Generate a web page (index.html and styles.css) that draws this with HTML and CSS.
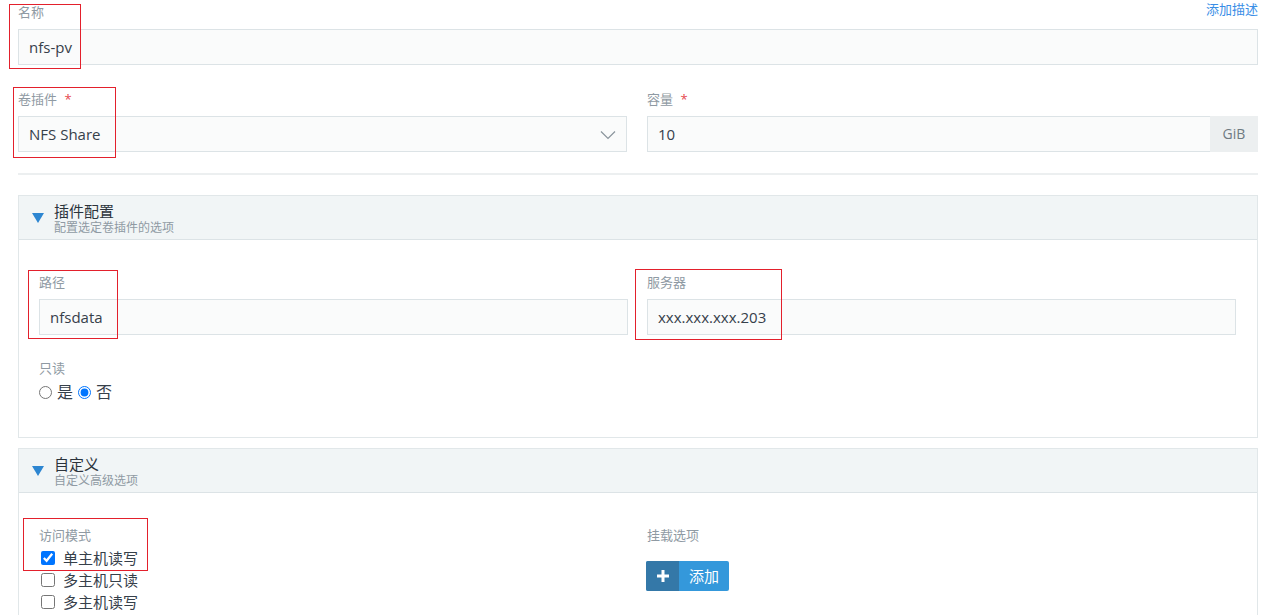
FILE: index.html
```html
<!DOCTYPE html>
<html lang="zh">
<head>
<meta charset="utf-8">
<title>创建存储卷</title>
<link rel="stylesheet" href="styles.css">
</head>
<body>
<div class="page">
  <div class="field">
    <div class="label-row">
      <span class="label">名称</span>
      <a class="link">添加描述</a>
    </div>
    <div class="input">nfs-pv</div>
  </div>

  <div class="grid two top-gap">
    <div class="field">
      <div class="label-row"><span class="label">卷插件 <span class="req">*</span></span></div>
      <div class="input select">NFS Share
        <svg class="chev" width="16" height="10" viewBox="0 0 16 10"><path d="M1 1.5 L8 8.5 L15 1.5" fill="none" stroke="#8a949c" stroke-width="1.2"/></svg>
      </div>
    </div>
    <div class="field">
      <div class="label-row"><span class="label">容量 <span class="req">*</span></span></div>
      <div class="input-group">
        <div class="input grow">10</div>
        <div class="addon">GiB</div>
      </div>
    </div>
  </div>

  <div class="sep"></div>

  <section class="panel p1">
    <header class="panel-head">
      <span class="tri"></span>
      <div>
        <div class="panel-title">插件配置</div>
        <div class="panel-sub">配置选定卷插件的选项</div>
      </div>
    </header>
    <div class="panel-body">
      <div class="grid two inner">
        <div class="field">
          <div class="label-row"><span class="label">路径</span></div>
          <div class="input">nfsdata</div>
        </div>
        <div class="field">
          <div class="label-row"><span class="label">服务器</span></div>
          <div class="input">xxx.xxx.xxx.203</div>
        </div>
      </div>
      <div class="field ro">
        <div class="label-row"><span class="label">只读</span></div>
        <div class="radios">
          <label class="opt"><input type="radio" name="ro"> 是</label>
          <label class="opt"><input type="radio" name="ro" checked> 否</label>
        </div>
      </div>
    </div>
  </section>

  <section class="panel p2">
    <header class="panel-head">
      <span class="tri"></span>
      <div>
        <div class="panel-title">自定义</div>
        <div class="panel-sub">自定义高级选项</div>
      </div>
    </header>
    <div class="panel-body body2">
      <div class="grid two inner">
        <div class="field">
          <div class="label-row"><span class="label">访问模式</span></div>
          <div class="checks">
            <label class="chk"><input type="checkbox" checked> 单主机读写</label>
            <label class="chk"><input type="checkbox"> 多主机只读</label>
            <label class="chk"><input type="checkbox"> 多主机读写</label>
          </div>
        </div>
        <div class="field">
          <div class="label-row"><span class="label">挂载选项</span></div>
          <button class="btn-add"><span class="plus">
            <svg width="12" height="12" viewBox="0 0 12 12"><path d="M4.5 0h3v4.5H12v3H7.5V12h-3V7.5H0v-3h4.5z" fill="#fff"/></svg>
          </span><span class="btn-text">添加</span></button>
        </div>
      </div>
    </div>
  </section>
</div>

<div class="mark m1"></div>
<div class="mark m2"></div>
<div class="mark m3"></div>
<div class="mark m4"></div>
<div class="mark m5"></div>
</body>
</html>
```

FILE: styles.css
```css
* { box-sizing: border-box; }
html, body { margin: 0; padding: 0; background: #fff; }
body {
  font-family: "Open Sans", "Noto Sans CJK SC", sans-serif;
  color: #36404a;
  width: 1274px;
  height: 615px;
  overflow: hidden;
  position: relative;
}
.page {
  width: 1240px;
  margin-left: 18px;
  padding-top: 2px;
}
.label-row {
  display: flex;
  justify-content: space-between;
  align-items: center;
  height: 20px;
  margin-bottom: 7px;
}
.label {
  font-size: 13px;
  color: #8f9aa3;
  line-height: 20px;
}
.req { color: #e5484d; margin-left: 4px; }
.link {
  font-size: 13px;
  color: #3a8ee6;
  line-height: 15px;
  align-self: flex-start;
}
.input {
  height: 36px;
  border: 1px solid #dce3e6;
  background: #fafbfb;
  font-size: 15px;
  line-height: 34px;
  padding: 0 10px;
  color: #36404a;
  position: relative;
}
.grid.two {
  display: grid;
  grid-template-columns: 609px 1fr;
  column-gap: 20px;
}
.top-gap { margin-top: 24px; }
.select { padding-right: 30px; }
.chev { position: absolute; right: 10px; top: 13px; }
.input-group { display: flex; }
.input-group .grow { flex: 1; border-right: none; }
.addon {
  width: 48px;
  height: 36px;
  background: #eceff0;
  font-size: 14px;
  line-height: 36px;
  text-align: center;
  color: #6f7a82;
}
.sep {
  height: 2px;
  background: #eceff0;
  margin-top: 21px;
}
.panel {
  border: 1px solid #e1e7e9;
}
.p1 { margin-top: 20px; height: 243px; }
.p2 { margin-top: 10px; height: 180px; }
.panel-head {
  height: 44px;
  background: #f1f5f6;
  border-bottom: 1px solid #dce3e6;
  display: flex;
  align-items: flex-start;
  padding: 6px 0 0 13px;
}
.tri {
  width: 0;
  height: 0;
  border-left: 6px solid transparent;
  border-right: 6px solid transparent;
  border-top: 10px solid #2d86d1;
  margin-top: 11px;
  margin-right: 10px;
}
.panel-title {
  font-size: 15px;
  line-height: 18px;
  color: #2b333b;
}
.panel-sub {
  font-size: 12px;
  line-height: 16px;
  color: #8f9aa3;
}
.panel-body {
  padding: 32px 21px 0 20px;
}
.grid.two.inner { grid-template-columns: 589px 1fr; column-gap: 19px; }
.ro { margin-top: 23px; }
.ro .label-row { margin-bottom: 3px; }
.radios { display: flex; align-items: center; font-size: 16px; line-height: 22px; color: #36404a; }
.opt { display: flex; align-items: center; margin-right: 5px; }
.opt input { margin: 0 5px 0 0; width: 13px; height: 13px; }
.body2 { padding-top: 32px; }
.body2 .label-row { margin-bottom: 2px; }
.checks { display: flex; flex-direction: column; margin-left: 2px; }
.chk { display: flex; align-items: center; font-size: 15px; line-height: 22px; color: #36404a; }
.chk input { margin: 0 8px 0 0; width: 14px; height: 14px; }
.btn-add {
  display: flex;
  align-items: stretch;
  height: 30px;
  padding: 0;
  border: none;
  margin-top: 16px;
  margin-left: -1px;
  background: #3498db;
  border-radius: 2px;
  overflow: hidden;
  font-family: inherit;
  cursor: pointer;
}
.plus {
  width: 33px;
  background: #3478a8;
  display: flex;
  align-items: center;
  justify-content: center;
}
.btn-text {
  color: #fff;
  font-size: 15px;
  line-height: 30px;
  padding: 0 10px;
}
.mark {
  position: absolute;
  border: 1px solid #e3202c;
  pointer-events: none;
}
.m1 { left: 9px; top: 4px; width: 72px; height: 65px; }
.m2 { left: 13px; top: 87px; width: 103px; height: 71px; }
.m3 { left: 28px; top: 270px; width: 90px; height: 69px; }
.m4 { left: 635px; top: 269px; width: 147px; height: 71px; }
.m5 { left: 23px; top: 518px; width: 125px; height: 53px; }
```
